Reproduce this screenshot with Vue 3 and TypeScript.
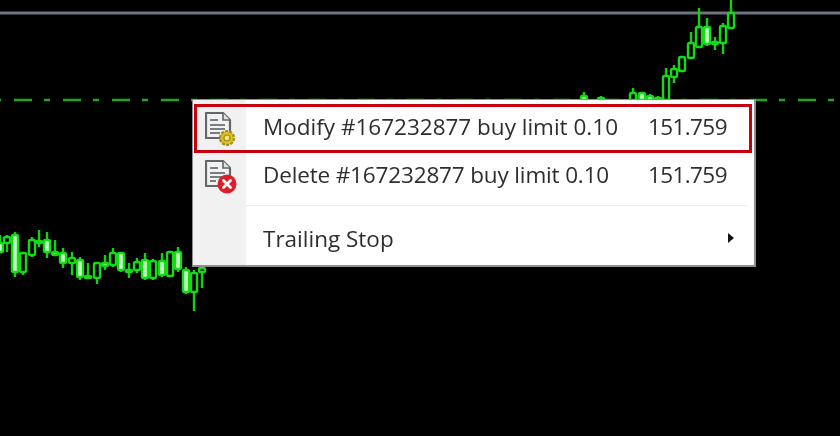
<script setup lang="ts">
type Candle = { x: number; t: number; b: number; bt: number; bb: number; f: boolean }
const raw: [number, number, number, number, number, number][] = [
  [0, 235, 252, 243, 252, 1], [7, 235, 252, 237, 243, 0], [15, 232, 277, 235, 272, 1], [23, 252, 275, 253, 272, 0],
  [32, 237, 257, 240, 255, 0], [39, 230, 247, 241, 243, 1], [47, 232, 258, 240, 252, 1], [55, 240, 255, 252, 255, 1],
  [63, 248, 268, 253, 263, 1], [72, 252, 275, 258, 263, 0], [80, 257, 280, 260, 277, 1], [88, 263, 278, 276, 278, 1],
  [97, 262, 284, 263, 278, 0], [105, 255, 270, 263, 266, 1], [113, 248, 267, 253, 265, 0], [121, 252, 272, 253, 270, 1],
  [129, 263, 278, 270, 272, 1], [137, 258, 273, 262, 270, 0], [145, 253, 280, 260, 278, 1], [153, 259, 280, 261, 278, 0],
  [162, 253, 277, 261, 275, 1], [170, 251, 277, 252, 276, 0], [178, 247, 272, 252, 269, 1], [186, 267, 294, 270, 292, 1],
  [194, 270, 311, 273, 292, 0], [202, 267, 288, 268, 272, 0],
  [584, 92, 100, 96, 100, 1], [601, 96, 100, 98, 100, 1], [633, 88, 100, 93, 100, 0], [642, 92, 100, 93, 100, 1],
  [650, 94, 100, 96, 100, 1], [658, 96, 100, 98, 100, 1], [666, 68, 100, 76, 100, 0], [674, 65, 83, 69, 77, 0],
  [682, 57, 71, 57, 71, 0], [691, 32, 59, 43, 58, 0], [699, 8, 48, 27, 47, 0], [707, 18, 46, 27, 44, 1],
  [715, 37, 50, 42, 44, 1], [723, 23, 54, 26, 43, 0], [731, 0, 29, 13, 28, 0],
]
const candles: Candle[] = raw.map(([x, t, b, bt, bb, f]) => ({ x, t, b, bt, bb, f: f === 1 }))
</script>

<template>
  <div class="screen">
    <svg class="chart" width="840" height="436" viewBox="0 0 840 436">
      <line x1="0" y1="13" x2="840" y2="13" stroke="#6d7480" stroke-width="3" />
      <line x1="-5" y1="100" x2="840" y2="100" stroke="#1fa81f" stroke-width="2.5" stroke-dasharray="6 13 18 12" />
      <g v-for="c in candles" :key="c.x">
        <line :x1="c.x" :y1="c.t" :x2="c.x" :y2="c.b" stroke="#12d012" stroke-width="2.4" />
        <rect
          :x="c.x - 3"
          :y="c.bt"
          width="6"
          :height="c.bb - c.bt"
          rx="1.5"
          stroke="#14dc14"
          stroke-width="2.4"
          :fill="c.f ? '#c4ffc4' : '#000'"
        />
      </g>
    </svg>

    <div class="menu">
      <div class="gutter"></div>
      <div class="items">
        <div class="item selected">
          <svg class="icon" width="42" height="42" viewBox="0 0 42 42">
            <path d="M1 1h17l7 7v18H1z" fill="#f2f2f2" stroke="#63666b" stroke-width="2.2" stroke-linejoin="round" />
            <path d="M18 1v7h7" fill="#dfe3e6" stroke="#63666b" stroke-width="1.6" />
            <path d="M5 8h8M5 13h15M5 17h15M5 21h10" stroke="#7a7e83" stroke-width="2.2" />
            <circle cx="22" cy="26" r="7" fill="#d9bf2c" stroke="#a68f14" stroke-width="2.2" stroke-dasharray="3 1.4" />
            <circle cx="22" cy="26" r="3" fill="#f3e37a" stroke="#a08b14" stroke-width="1.2" />
          </svg>
          <span class="label">Modify #167232877 buy limit 0.10</span>
          <span class="price">151.759</span>
        </div>
        <div class="item">
          <svg class="icon" width="42" height="42" viewBox="0 0 42 42">
            <path d="M1 1h17l7 7v18H1z" fill="#f2f2f2" stroke="#63666b" stroke-width="2.2" stroke-linejoin="round" />
            <path d="M18 1v7h7" fill="#dfe3e6" stroke="#63666b" stroke-width="1.6" />
            <path d="M5 8h8M5 13h15M5 17h15M5 21h6" stroke="#7a7e83" stroke-width="2.2" />
            <circle cx="22" cy="24" r="9.5" fill="#dd1f2c" />
            <path d="M18.5 20.5l7 7M25.5 20.5l-7 7" stroke="#fff" stroke-width="2.8" stroke-linecap="round" />
          </svg>
          <span class="label tight">Delete #167232877 buy limit 0.10</span>
          <span class="price">151.759</span>
        </div>
        <div class="separator"></div>
        <div class="item submenu">
          <span class="label">Trailing Stop</span>
          <span class="arrow"></span>
        </div>
      </div>
      <div class="highlight"></div>
    </div>
  </div>
</template>

<style>
html, body { margin: 0; background: #000; }
</style>

<style scoped>
.screen {
  position: relative;
  width: 840px;
  height: 436px;
  background: #000;
  overflow: hidden;
  font-family: "Open Sans", "Noto Sans", sans-serif;
}
.chart {
  position: absolute;
  inset: 0;
  filter: blur(0.6px);
}
.menu {
  position: absolute;
  left: 192px;
  top: 99px;
  width: 564px;
  height: 168px;
  box-sizing: border-box;
  display: flex;
  background: #fff;
  border: 1px solid #8f8f8f;
  border-right-width: 2px;
  border-bottom-width: 2px;
}
.gutter {
  width: 53px;
  background: #f1f1f1;
  flex: none;
}
.items {
  position: absolute;
  inset: 4px 0 0 0;
  display: flex;
  flex-direction: column;
}
.item {
  display: flex;
  align-items: center;
  height: 46px;
  padding-left: 70px;
  padding-bottom: 2px;
  color: #2e2e2e;
  font-size: 22.5px;
  position: relative;
}
.item + .item { height: 45px; }
.icon {
  position: absolute;
  left: 12px;
  top: 8px;
}
.label { width: 385px; flex: none; white-space: nowrap; filter: blur(0.3px); }
.label.tight { letter-spacing: -0.15px; }
.price { white-space: nowrap; letter-spacing: -0.6px; filter: blur(0.3px); }
.separator {
  height: 1px;
  margin: 7px 6px 7px 53px;
  background: #ececec;
}
.item.submenu { height: 50px; }
.arrow {
  width: 0;
  height: 0;
  margin-left: 80px;
  border-left: 6px solid #111;
  border-top: 5px solid transparent;
  border-bottom: 5px solid transparent;
}
.highlight {
  position: absolute;
  left: 1px;
  top: 4px;
  width: 558px;
  height: 49px;
  box-sizing: border-box;
  border: 3px solid #c5000f;
  pointer-events: none;
}
</style>
